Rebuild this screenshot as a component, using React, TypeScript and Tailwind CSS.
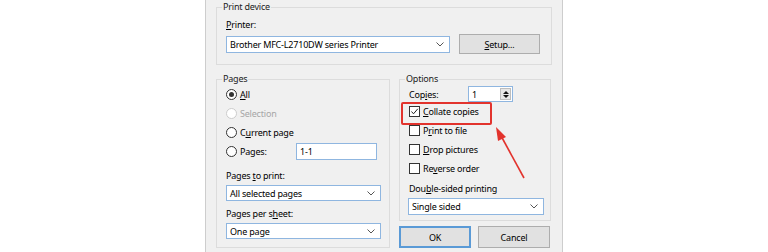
import React from "react";

const font = { fontFamily: '"Noto Sans", "Open Sans", sans-serif', letterSpacing: "-0.2px" };

function Chevron() {
  return (
    <svg width="8" height="5" viewBox="0 0 8 5" className="shrink-0">
      <polyline points="0.5,0.5 4,4 7.5,0.5" fill="none" stroke="#555" strokeWidth="1" />
    </svg>
  );
}

function Combo({ text, className }: { text: string; className: string }) {
  return (
    <div className={`flex items-center justify-between bg-white border border-[#8fb6e0] pl-[3px] pr-[5px] ${className}`}>
      <span className="leading-none">{text}</span>
      <Chevron />
    </div>
  );
}

function U({ children }: { children: React.ReactNode }) {
  return <span className="underline underline-offset-[1px]">{children}</span>;
}

function Radio({ checked, disabled, children }: { checked?: boolean; disabled?: boolean; children: React.ReactNode }) {
  return (
    <div className={`flex items-center h-[19px] ${disabled ? "text-[#a6a6a6]" : "text-black"}`}>
      <span
        className={`w-[11px] h-[11px] rounded-full border flex items-center justify-center bg-white ${disabled ? "border-[#cccccc]" : "border-[#333]"}`}
      >
        {checked && <span className="w-[5px] h-[5px] rounded-full bg-[#333]" />}
      </span>
      <span className="ml-[3px] leading-none">{children}</span>
    </div>
  );
}

function Check({ checked, children }: { checked?: boolean; children: React.ReactNode }) {
  return (
    <div className="flex items-center h-[19px]">
      <span className="w-[11px] h-[11px] border border-[#333] bg-white flex items-center justify-center">
        {checked && (
          <svg width="9" height="9" viewBox="0 0 9 9">
            <polyline points="1.5,4.5 3.5,6.8 7.8,1.8" fill="none" stroke="#222" strokeWidth="1" />
          </svg>
        )}
      </span>
      <span className="ml-[3px] leading-none">{children}</span>
    </div>
  );
}

export default function App() {
  return (
    <div className="w-[768px] h-[252px] bg-white overflow-hidden flex text-[9px] text-black" style={font}>
      <div className="relative ml-[205px] w-[358px] h-[260px] bg-[#f0f0f0] border-x border-[#cdcdcd] pl-[10px] pr-[10px] flex flex-col">
        {/* Print device */}
        <fieldset className="border border-[#dcdcdc] px-[9px] pb-[10px]">
          <legend className="px-[1px] ml-[-4px] leading-[14px] text-[#222]">Print device</legend>
          <div className="mt-[4px] leading-[14px]">
            <U>P</U>rinter:
          </div>
          <div className="mt-[2px] flex items-center">
            <Combo text="Brother MFC-L2710DW series Printer" className="w-[224px] h-[17px]" />
            <div className="ml-[9px] w-[81px] h-[20px] bg-[#e1e1e1] border border-[#adadad] flex items-center justify-center leading-none">
              <span>
                <U>S</U>etup...
              </span>
            </div>
          </div>
        </fieldset>

        <div className="mt-[7px] flex gap-[9px]">
          {/* Pages */}
          <fieldset className="w-[174px] h-[176px] border border-[#dcdcdc] pl-[9px] pr-[8px]">
            <legend className="px-[1px] ml-[-4px] leading-[14px] text-[#222]">Pages</legend>
            <div className="mt-[-1px] flex flex-col">
              <Radio checked>
                <U>A</U>ll
              </Radio>
              <Radio disabled>Selection</Radio>
              <Radio>
                C<U>u</U>rrent page
              </Radio>
              <div className="flex items-center">
                <div className="w-[70px]">
                  <Radio>Pages:</Radio>
                </div>
                <div className="w-[81px] h-[17px] bg-white border border-[#8fb6e0] flex items-center pl-[3px] leading-none">1-1</div>
              </div>
            </div>
            <div className="mt-[8px] leading-[14px]">
              Pages <U>t</U>o print:
            </div>
            <Combo text="All selected pages" className="mt-[2px] w-[155px] h-[16px]" />
            <div className="mt-[6px] leading-[14px]">
              Pages per s<U>h</U>eet:
            </div>
            <Combo text="One page" className="mt-[2px] w-[155px] h-[16px]" />
          </fieldset>

          <div className="flex flex-col">
            {/* Options */}
            <fieldset className="w-[152px] h-[149px] border border-[#dcdcdc] pl-[9px] pr-[5px]">
              <legend className="px-[1px] ml-[-4px] leading-[14px] text-[#222]">Options</legend>
              <div className="flex items-center h-[16px] mt-[0px]">
                <span className="w-[59px] leading-none">
                  Cop<U>i</U>es:
                </span>
                <div className="w-[45px] h-[16px] bg-white border border-[#8fb6e0] flex items-center justify-between pl-[3px] pr-[1px]">
                  <span className="leading-none">1</span>
                  <span className="w-[11px] h-[12px] bg-[#e6e6e6] border border-[#bdbdbd] flex flex-col items-center justify-center gap-[1px]">
                    <svg width="6" height="3" viewBox="0 0 6 3"><polygon points="0,3 3,0 6,3" fill="#111" /></svg>
                    <svg width="6" height="3" viewBox="0 0 6 3"><polygon points="0,0 6,0 3,3" fill="#111" /></svg>
                  </span>
                </div>
              </div>
              <div className="mt-[0px] flex flex-col">
                <Check checked>
                  <U>C</U>ollate copies
                </Check>
                <Check>
                  P<U>r</U>int to file
                </Check>
                <Check>
                  <U>D</U>rop pictures
                </Check>
                <Check>
                  Re<U>v</U>erse order
                </Check>
              </div>
              <div className="mt-[4px] leading-[14px]">
                Dou<U>b</U>le-sided printing
              </div>
              <Combo text="Single sided" className="mt-[2px] ml-[-1px] w-[136px] h-[17px]" />
            </fieldset>
            <div className="mt-[5px] flex gap-[7px]">
              <div className="w-[72px] h-[22px] bg-[#e1e1e1] border-2 border-[#5a9ad6] flex items-center justify-center leading-none">
                OK
              </div>
              <div className="w-[72px] h-[22px] bg-[#e1e1e1] border border-[#adadad] flex items-center justify-center leading-none">
                Cancel
              </div>
            </div>
          </div>
        </div>

        {/* Red highlight overlay */}
        <div className="absolute left-[195px] top-[102px] w-[91px] h-[23px] border-2 border-[#e2332d] rounded-[2px] pointer-events-none" />
        <svg className="absolute left-[282px] top-[125px] pointer-events-none" width="40" height="60" viewBox="0 0 40 60">
          <line x1="36" y1="53" x2="12" y2="9" stroke="#e2332d" strokeWidth="1.6" />
          <polygon points="8,2 18,12 10,16" fill="#e2332d" />
        </svg>
      </div>
    </div>
  );
}
